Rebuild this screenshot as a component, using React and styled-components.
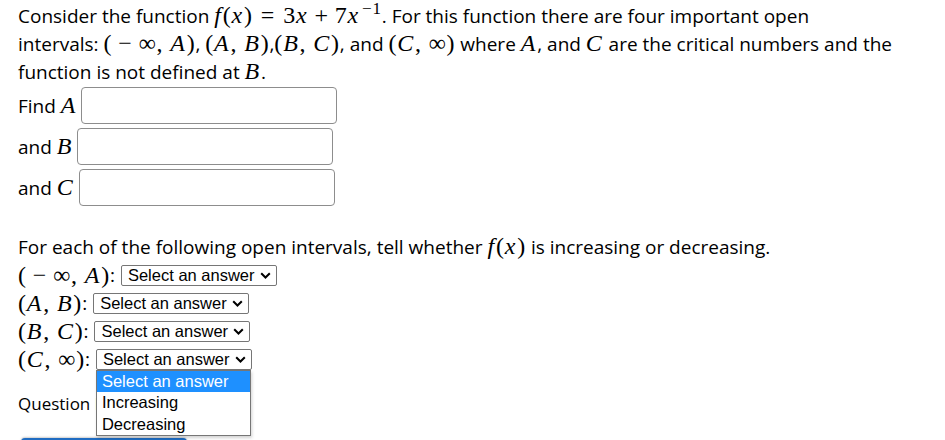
import React from "react";
import styled, { createGlobalStyle } from "styled-components";

const Global = createGlobalStyle`
  html, body { margin: 0; padding: 0; background: #fff; overflow: hidden; }
  body {
    font-family: "Open Sans", "Noto Sans", sans-serif;
    font-size: 19px;
    color: #000;
  }
`;

const Page = styled.div`
  padding: 2px 18px 0 18px;
  width: 909px;
`;

const Para = styled.div`
  line-height: 28px;
  margin-top: ${(p) => p.$top || 0}px;
  font-size: ${(p) => p.$size || 19}px;
  white-space: nowrap;
`;

const M = styled.span`
  font-family: "Liberation Serif", "DejaVu Serif", serif;
  font-size: 24px;
  line-height: 0;
  letter-spacing: 0.8px;
  white-space: nowrap;
`;

const V = styled.i`
  font-style: italic;
  padding-right: 1px;
`;

const Op = styled.span`
  padding: 0 ${(p) => p.$pad || 4}px;
`;

const Sup = styled.sup`
  font-size: 17px;
  vertical-align: 9px;
  line-height: 0;
  padding-left: 2px;
`;

const InputRow = styled.div`
  display: flex;
  align-items: center;
  gap: 4px;
  height: 37px;
  margin-top: ${(p) => p.$top}px;
  line-height: 28px;
`;

const TextInput = styled.div`
  width: 254px;
  height: 35px;
  border: 1px solid #8d8d8d;
  border-radius: 4px;
  background: #fff;
`;

const SelectRow = styled.div`
  display: flex;
  align-items: center;
  height: 28px;
  line-height: 28px;
  white-space: nowrap;
`;

const SelectWrap = styled.div`
  position: relative;
  margin-left: 6px;
  line-height: normal;
`;

const SelectBox = styled.div`
  display: flex;
  align-items: center;
  justify-content: space-between;
  box-sizing: border-box;
  width: 156px;
  height: 21px;
  padding: 0 5px 0 6px;
  border: 1px solid #767676;
  border-radius: 2px;
  background: #fff;
  font-family: "Liberation Sans", Arial, sans-serif;
  font-size: 16.5px;
  color: #000;
`;

const Chevron = styled.svg`
  width: 11px;
  height: 7px;
  margin-left: 3px;
  flex: none;
`;

const Dropdown = styled.div`
  position: absolute;
  top: 100%;
  left: 0;
  width: 155px;
  box-sizing: border-box;
  border: 1px solid #767676;
  background: #fff;
  box-shadow: 1px 2px 3px rgba(0, 0, 0, 0.18);
  font-family: "Liberation Sans", Arial, sans-serif;
  font-size: 16.5px;
  z-index: 5;
`;

const Option = styled.div`
  height: 21.5px;
  line-height: 21px;
  padding-left: 5px;
  background: ${(p) => (p.$active ? "#1e90ff" : "#fff")};
  color: ${(p) => (p.$active ? "#fff" : "#000")};
`;

const Blue = styled.div`
  margin-top: 20px;
  margin-left: 3px;
  width: 166px;
  height: 36px;
  background: #1f6cc2;
  border-radius: 4px;
  box-shadow: 0 -1px 2px rgba(0, 0, 0, 0.2);
`;

const Chev = () => (
  <Chevron viewBox="0 0 11 7">
    <path d="M1.2 1.2 L5.5 5.5 L9.8 1.2" fill="none" stroke="#000" strokeWidth="2" />
  </Chevron>
);

const Select = ({ open }) => (
  <SelectWrap>
    <SelectBox>
      <span>Select an answer</span>
      <Chev />
    </SelectBox>
    {open && (
      <Dropdown>
        <Option $active>Select an answer</Option>
        <Option>Increasing</Option>
        <Option>Decreasing</Option>
      </Dropdown>
    )}
  </SelectWrap>
);

const Inf = () => <span>∞</span>;

const NegInfA = () => (
  <M>
    (<Op $pad={6}>−</Op>
    <Inf />, <V>A</V>)
  </M>
);

export default function App() {
  return (
    <>
      <Global />
      <Page>
        <Para>
          Consider the function{" "}
          <M>
            <V>f</V>(<V>x</V>)<Op $pad={8}>=</Op>3<V>x</V>
            <Op $pad={6}>+</Op>7<V>x</V>
            <Sup>−1</Sup>
          </M>
          . For this function there are four important open
          <br />
          intervals: <NegInfA />,{" "}
          <M>
            (<V>A</V>, <V>B</V>)
          </M>
          ,
          <M>
            (<V>B</V>, <V>C</V>)
          </M>
          , and{" "}
          <M>
            (<V>C</V>, <Inf />)
          </M>{" "}
          where <M><V>A</V></M>, and <M><V>C</V></M> are the critical numbers and the
          <br />
          function is not defined at <M><V>B</V></M>.
        </Para>

        <InputRow $top={1}>
          <span>
            Find <M><V>A</V></M>
          </span>
          <TextInput />
        </InputRow>
        <InputRow $top={4}>
          <span>
            and <M><V>B</V></M>
          </span>
          <TextInput />
        </InputRow>
        <InputRow $top={4}>
          <span>
            and <M><V>C</V></M>
          </span>
          <TextInput />
        </InputRow>

        <Para $top={27}>
          For each of the following open intervals, tell whether{" "}
          <M>
            <V>f</V>(<V>x</V>)
          </M>{" "}
          is increasing or decreasing.
        </Para>

        <SelectRow>
          <NegInfA />:
          <Select />
        </SelectRow>
        <SelectRow>
          <M>
            (<V>A</V>, <V>B</V>)
          </M>
          :
          <Select />
        </SelectRow>
        <SelectRow>
          <M>
            (<V>B</V>, <V>C</V>)
          </M>
          :
          <Select />
        </SelectRow>
        <SelectRow>
          <M>
            (<V>C</V>, <Inf />)
          </M>
          :
          <Select open />
        </SelectRow>

        <Para $top={17} $size={17}>Question Help:</Para>
        <Blue />
      </Page>
    </>
  );
}
